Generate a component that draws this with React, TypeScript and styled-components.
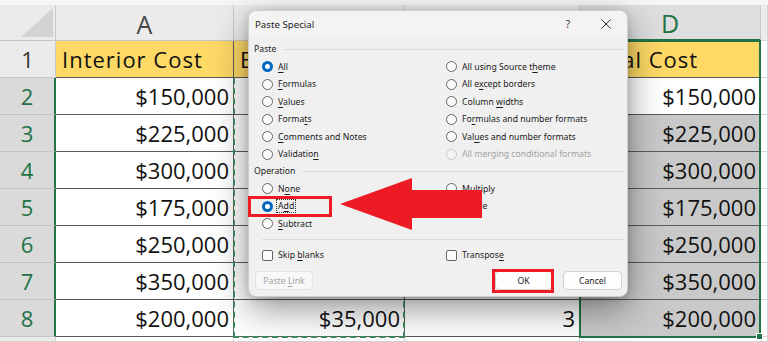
import React from 'react';
import styled, { createGlobalStyle, css } from 'styled-components';

const GlobalStyle = createGlobalStyle`
  html, body {
    margin: 0;
    padding: 0;
    background: #ffffff;
  }
  body {
    width: 768px;
    height: 342px;
    overflow: hidden;
    font-family: 'Open Sans', 'Noto Sans', sans-serif;
  }
`;

const GREEN = '#217346';
const RED = '#ed1c24';

const Stage = styled.div`
  position: relative;
  width: 768px;
  height: 342px;
  overflow: hidden;
  background: #ffffff;
`;

/* ---------- spreadsheet ---------- */

const Sheet = styled.div`
  display: grid;
  grid-template-columns: 56px 178px 171px 175px 181px 7px;
  grid-template-rows: 5px 36px repeat(8, 37px) 5px;
  width: 768px;
  height: 342px;
`;

const TopStrip = styled.div`
  grid-row: 1;
  grid-column: 1 / -1;
  background: #f6f6f6;
`;

const Corner = styled.div`
  grid-row: 2;
  grid-column: 1;
  position: relative;
  background: #ebebeb;
  border-right: 1px solid #c9c9c9;
  border-bottom: 1px solid #c4c4c4;

  &::after {
    content: '';
    position: absolute;
    right: 2px;
    bottom: 3px;
    width: 32px;
    height: 29px;
    background: #d3d3d3;
    clip-path: polygon(100% 0, 100% 100%, 0 100%);
  }
`;

const ColHead = styled.div<{ $col: number; $selected?: boolean }>`
  grid-row: 2;
  grid-column: ${(p) => p.$col};
  box-sizing: border-box;
  display: flex;
  align-items: center;
  justify-content: center;
  background: ${(p) => (p.$selected ? '#dedede' : '#ebebeb')};
  border-right: 1px solid #c9c9c9;
  border-bottom: ${(p) => (p.$selected ? `2px solid ${GREEN}` : '1px solid #c4c4c4')};
  font-size: 25px;
  color: ${(p) => (p.$selected ? GREEN : '#444444')};
  padding-top: 2px;
`;

const RowHead = styled.div<{ $row: number; $selected?: boolean }>`
  grid-row: ${(p) => p.$row};
  grid-column: 1;
  box-sizing: border-box;
  display: flex;
  align-items: center;
  justify-content: center;
  background: ${(p) => (p.$selected ? '#dadada' : '#ebebeb')};
  border-bottom: 1px solid #c4c4c4;
  border-right: ${(p) => (p.$selected ? `2px solid ${GREEN}` : '1px solid #c9c9c9')};
  font-size: 22px;
  color: ${(p) => (p.$selected ? GREEN : '#333333')};
`;

type Fill = 'yellow' | 'white' | 'selected';

const fills: Record<Fill, string> = {
  yellow: '#fed966',
  white: '#ffffff',
  selected: '#c9c9c9',
};

const Cell = styled.div<{ $row: number; $col: number; $fill: Fill; $left?: boolean }>`
  grid-row: ${(p) => p.$row};
  grid-column: ${(p) => p.$col};
  box-sizing: border-box;
  display: flex;
  align-items: center;
  justify-content: ${(p) => (p.$left ? 'flex-start' : 'flex-end')};
  padding: 0 4px 0 6px;
  background: ${(p) => fills[p.$fill]};
  border-right: 1px solid #5a5a5a;
  border-bottom: 1px solid #5a5a5a;
  font-size: 22px;
  letter-spacing: ${(p) => (p.$left ? '1px' : '0')};
  color: #111111;
  white-space: nowrap;
  overflow: hidden;
`;

const Blank = styled.div<{ $row: number; $col: number; $head?: boolean }>`
  grid-row: ${(p) => p.$row};
  grid-column: ${(p) => p.$col};
  background: ${(p) => (p.$head ? '#ebebeb' : '#ffffff')};
  border-right: 1px solid #d4d4d4;
  border-bottom: 1px solid #d4d4d4;
`;

const Marquee = styled.div`
  grid-row: 4 / 11;
  grid-column: 3;
  margin: 0 0 -1px -1px;
  border: 2px dashed #3f8a5f;
  border-top: none;
  pointer-events: none;
`;

const Selection = styled.div`
  grid-row: 3 / 11;
  grid-column: 5;
  position: relative;
  margin: -1px 0 -1px -1px;
  border: 2px solid ${GREEN};
  pointer-events: none;

  &::after {
    content: '';
    position: absolute;
    right: -4px;
    bottom: -4px;
    width: 5px;
    height: 5px;
    background: ${GREEN};
    border: 1px solid #ffffff;
  }
`;

/* ---------- dialog ---------- */

const Dialog = styled.div`
  position: absolute;
  left: 248px;
  top: 10px;
  width: 380px;
  height: 287px;
  box-sizing: border-box;
  display: flex;
  flex-direction: column;
  background: #f0f0f0;
  border: 1px solid #cdcdcd;
  border-radius: 8px;
  box-shadow: 0 12px 36px rgba(0, 0, 0, 0.42), 0 2px 8px rgba(0, 0, 0, 0.15);
  font-family: 'Noto Sans', 'Liberation Sans', sans-serif;
  font-size: 8.7px;
  color: #1b1b1b;
`;

const TitleBar = styled.div`
  height: 26px;
  display: flex;
  align-items: center;
  padding-left: 6px;
  background: #f3f3f3;
  border-radius: 8px 8px 0 0;
`;

const Title = styled.span`
  font-size: 9.7px;
  flex: 1;
`;

const TitleButton = styled.span`
  width: 38px;
  height: 26px;
  display: flex;
  align-items: center;
  justify-content: center;
  font-size: 10px;
  color: #333333;
  &:last-child {
    margin-right: 2px;
  }
`;

const Body = styled.div`
  display: flex;
  flex-direction: column;
  padding: 5px 3px 0 5px;
`;

const GroupLabel = styled.div<{ $gap?: number }>`
  height: 14px;
  display: flex;
  align-items: center;
  gap: 7px;
  margin-top: ${(p) => p.$gap ?? 0}px;

  &::after {
    content: '';
    flex: 1;
    height: 1px;
    background: #dcdcdc;
  }
`;

const Options = styled.div`
  display: grid;
  grid-template-columns: 184px 1fr;
  align-items: start;
  padding-left: 8px;
  margin-top: 2px;
`;

const OptionColumn = styled.div`
  display: flex;
  flex-direction: column;
`;

const Option = styled.label<{ $disabled?: boolean }>`
  height: 17.5px;
  display: flex;
  align-items: center;
  gap: 5px;
  color: ${(p) => (p.$disabled ? '#a2a2a2' : 'inherit')};
  white-space: nowrap;
`;

const Radio = styled.span<{ $checked?: boolean; $disabled?: boolean }>`
  flex: none;
  width: 11px;
  height: 11px;
  box-sizing: border-box;
  border-radius: 50%;
  border: 1px solid #666666;
  background: #fbfbfb;
  ${(p) =>
    p.$checked &&
    css`
      border: 3px solid #0067c0;
      background: #ffffff;
    `}
  ${(p) =>
    p.$disabled &&
    css`
      border-color: #c8c8c8;
      background: #f4f4f4;
    `}
`;

const Check = styled.span`
  flex: none;
  width: 11px;
  height: 11px;
  box-sizing: border-box;
  border-radius: 2px;
  border: 1px solid #666666;
  background: #fbfbfb;
`;

const Focus = styled.span`
  outline: 1px dotted #333333;
  outline-offset: 0;
  padding: 0 1px;
  margin-left: -1px;
`;

const Key = styled.span`
  text-decoration: underline;
  text-underline-offset: 1.5px;
`;

const Separator = styled.div`
  height: 1px;
  margin: 6.5px 0 0 8px;
  background: #dcdcdc;
`;

const Checks = styled(Options)`
  margin-top: 6.5px;
`;

const ButtonRow = styled.div`
  display: flex;
  align-items: center;
  margin-top: 7px;
  padding: 0 2px 0 1px;
`;

const Button = styled.span<{ $width: number; $disabled?: boolean }>`
  width: ${(p) => p.$width}px;
  height: 19px;
  box-sizing: border-box;
  display: flex;
  align-items: center;
  justify-content: center;
  border-radius: 4px;
  border: 1px solid ${(p) => (p.$disabled ? '#e2e2e2' : '#d0d0d0')};
  background: ${(p) => (p.$disabled ? '#f8f8f8' : '#fdfdfd')};
  color: ${(p) => (p.$disabled ? '#a3a3a3' : '#1b1b1b')};
  white-space: pre;
  & + & {
    margin-left: 11px;
  }
`;

const Spacer = styled.span`
  flex: 1;
`;

/* ---------- annotations ---------- */

const AddHighlight = styled.div`
  position: absolute;
  left: 248px;
  top: 196px;
  width: 84px;
  height: 21px;
  box-sizing: border-box;
  border: 3px solid ${RED};
`;

const OkHighlight = styled.div`
  position: absolute;
  left: 492px;
  top: 269px;
  width: 62px;
  height: 24px;
  box-sizing: border-box;
  border: 3px solid ${RED};
`;

const Arrow = styled.svg`
  position: absolute;
  left: 340px;
  top: 178px;
`;

/* ---------- data ---------- */

const sheetRows = [
  ['Interior Cost', 'Exterior Cost', 'Quantity', 'Total Cost'],
  ['$150,000', '$20,000', '2', '$150,000'],
  ['$225,000', '$30,000', '1', '$225,000'],
  ['$300,000', '$45,000', '3', '$300,000'],
  ['$175,000', '$25,000', '2', '$175,000'],
  ['$250,000', '$40,000', '1', '$250,000'],
  ['$350,000', '$50,000', '2', '$350,000'],
  ['$200,000', '$35,000', '3', '$200,000'],
];

type Opt = { label: string; k?: number; checked?: boolean; disabled?: boolean; focus?: boolean };

const pasteLeft: Opt[] = [
  { label: 'All', k: 0, checked: true },
  { label: 'Formulas', k: 0 },
  { label: 'Values', k: 0 },
  { label: 'Formats', k: 5 },
  { label: 'Comments and Notes', k: 0 },
  { label: 'Validation', k: 9 },
];

const pasteRight: Opt[] = [
  { label: 'All using Source theme', k: 18 },
  { label: 'All except borders', k: 5 },
  { label: 'Column widths', k: 7 },
  { label: 'Formulas and number formats', k: 2 },
  { label: 'Values and number formats', k: 3 },
  { label: 'All merging conditional formats', disabled: true },
];

const opLeft: Opt[] = [
  { label: 'None', k: 1 },
  { label: 'Add', k: 1, checked: true, focus: true },
  { label: 'Subtract', k: 0 },
];

const opRight: Opt[] = [
  { label: 'Multiply', k: 0 },
  { label: 'Divide', k: 1 },
];

function withKey(text: string, k?: number) {
  if (k === undefined) return text;
  return (
    <>
      {text.slice(0, k)}
      <Key>{text[k]}</Key>
      {text.slice(k + 1)}
    </>
  );
}

function OptionList({ items }: { items: Opt[] }) {
  return (
    <OptionColumn>
      {items.map((o) => (
        <Option key={o.label} $disabled={o.disabled}>
          <Radio $checked={o.checked} $disabled={o.disabled} />
          {o.focus ? <Focus>{withKey(o.label, o.k)}</Focus> : <span>{withKey(o.label, o.k)}</span>}
        </Option>
      ))}
    </OptionColumn>
  );
}

function fillFor(r: number, c: number): Fill {
  if (r === 0) return 'yellow';
  if (c === 3 && r >= 2) return 'selected';
  return 'white';
}

export default function App() {
  return (
    <Stage>
      <GlobalStyle />
      <Sheet>
        <TopStrip />
        <Corner />
        {['A', 'B', 'C', 'D'].map((l, i) => (
          <ColHead key={l} $col={i + 2} $selected={l === 'D'}>
            {l}
          </ColHead>
        ))}
        <Blank $row={2} $col={6} $head />

        {sheetRows.map((row, r) => (
          <React.Fragment key={r}>
            <RowHead $row={r + 3} $selected={r > 0}>
              {r + 1}
            </RowHead>
            {row.map((v, c) => (
              <Cell key={c} $row={r + 3} $col={c + 2} $fill={fillFor(r, c)} $left={r === 0}>
                {v}
              </Cell>
            ))}
            <Blank $row={r + 3} $col={6} />
          </React.Fragment>
        ))}

        <Blank $row={11} $col={1} $head />
        {[2, 3, 4, 5, 6].map((c) => (
          <Blank key={c} $row={11} $col={c} />
        ))}

        <Marquee />
        <Selection />
      </Sheet>

      <Dialog>
        <TitleBar>
          <Title>Paste Special</Title>
          <TitleButton>?</TitleButton>
          <TitleButton>
            <svg width="10" height="10" viewBox="0 0 10 10">
              <path d="M0.5 0.5 L9.5 9.5 M9.5 0.5 L0.5 9.5" stroke="#333" strokeWidth="1" fill="none" />
            </svg>
          </TitleButton>
        </TitleBar>

        <Body>
          <GroupLabel>Paste</GroupLabel>
          <Options>
            <OptionList items={pasteLeft} />
            <OptionList items={pasteRight} />
          </Options>

          <GroupLabel $gap={1}>Operation</GroupLabel>
          <Options>
            <OptionList items={opLeft} />
            <OptionList items={opRight} />
          </Options>

          <Separator />

          <Checks>
            <Option>
              <Check />
              <span>{withKey('Skip blanks', 5)}</span>
            </Option>
            <Option>
              <Check />
              <span>{withKey('Transpose', 8)}</span>
            </Option>
          </Checks>

          <ButtonRow>
            <Button $width={58} $disabled>
              {withKey('Paste Link', 6)}
            </Button>
            <Spacer />
            <Button $width={57}>OK</Button>
            <Button $width={59}>Cancel</Button>
          </ButtonRow>
        </Body>
      </Dialog>

      <AddHighlight />
      <OkHighlight />
      <Arrow width="142" height="53" viewBox="0 0 142 53">
        <polygon points="0,26 72,0 72,12 142,12 142,40 72,40 72,52" fill={RED} />
      </Arrow>
    </Stage>
  );
}
